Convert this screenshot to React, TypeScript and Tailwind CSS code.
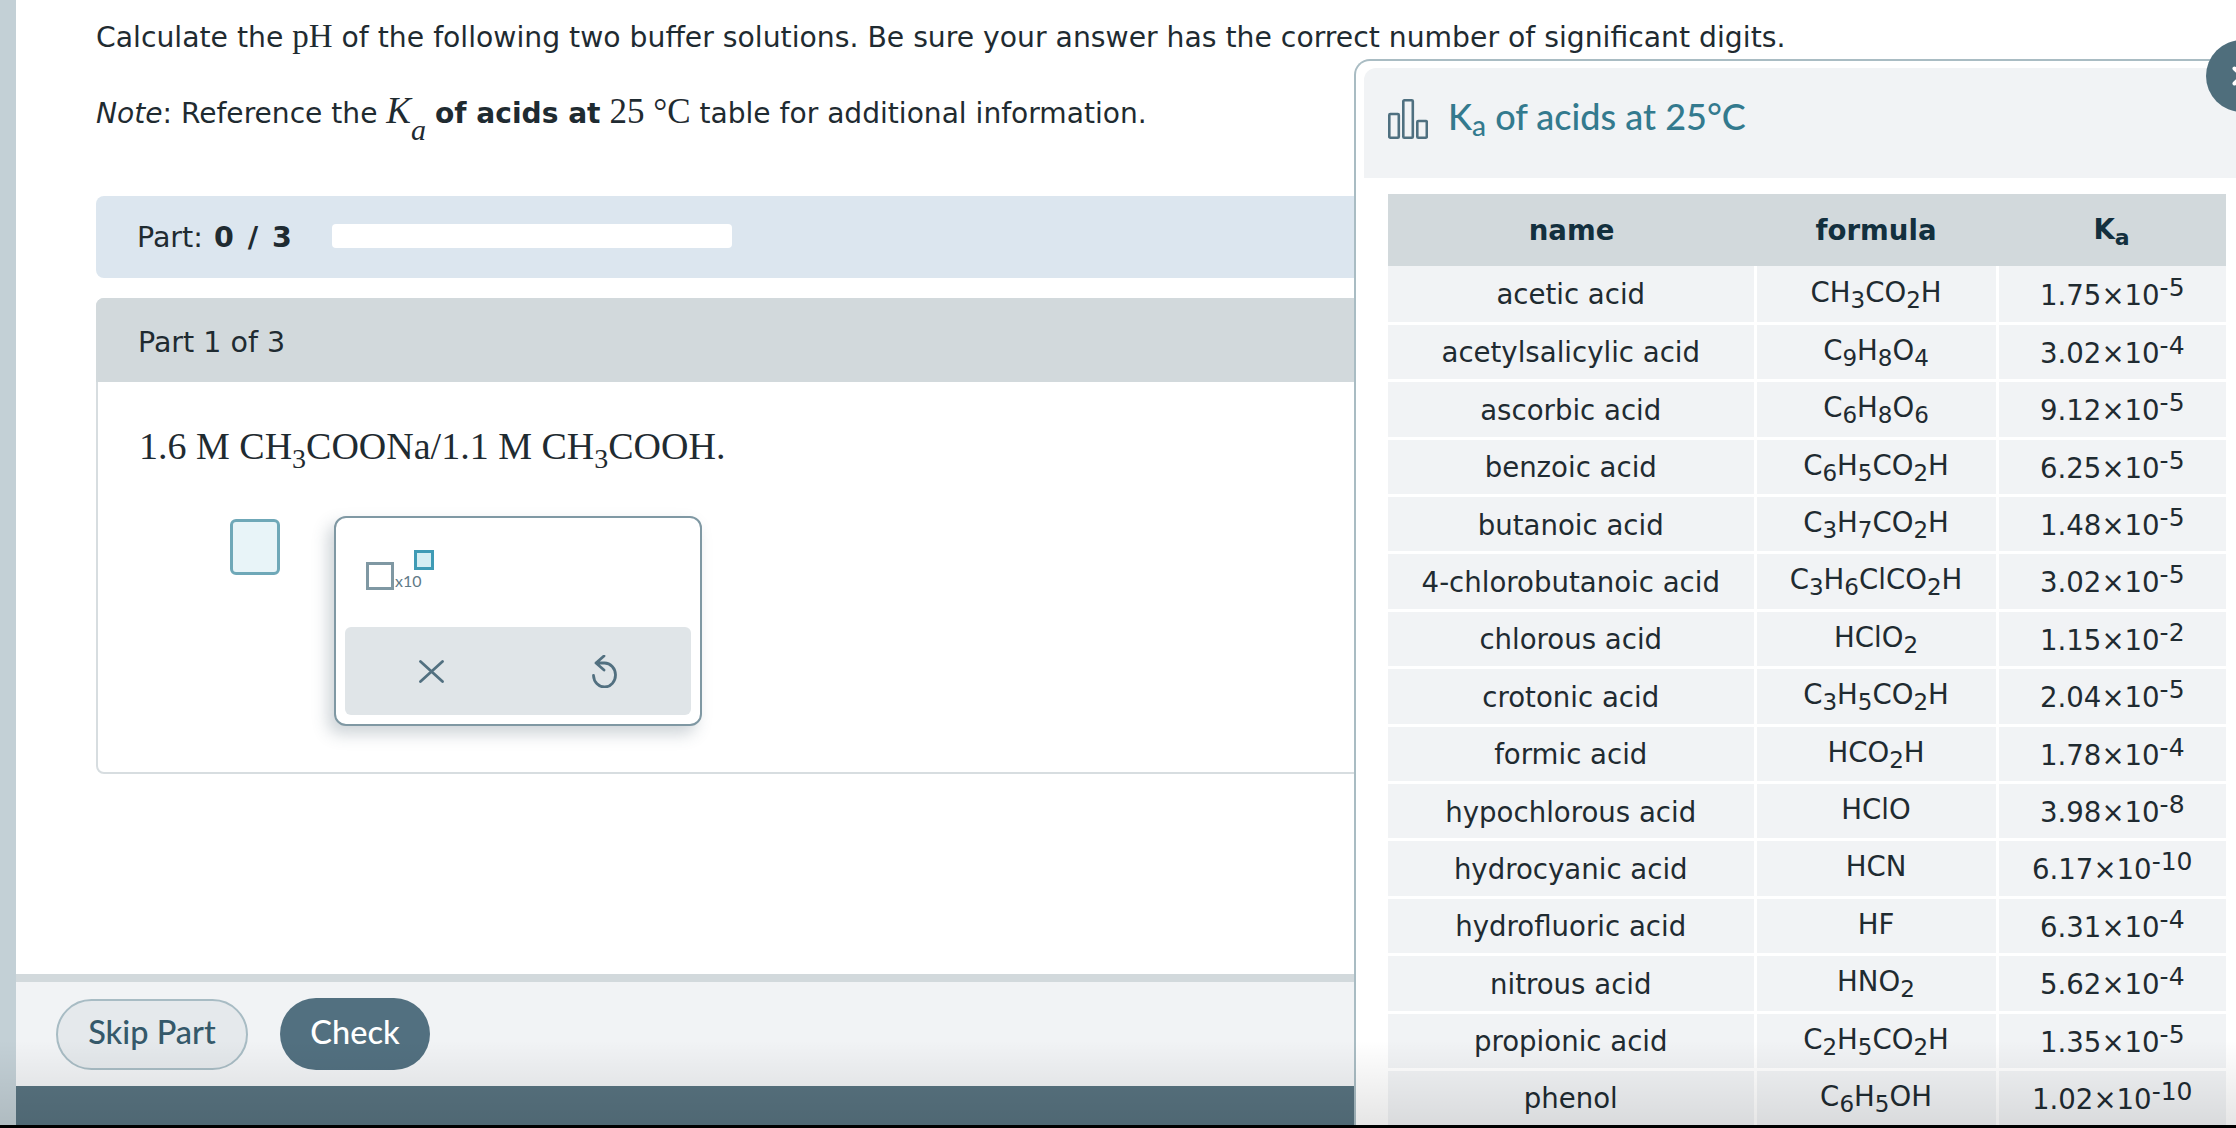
import React from "react";
import { X } from "lucide-react";

type Row = [string, React.ReactNode, string, string];
const S = ({ c }: { c: string }) => <span className="text-[23px] leading-none align-[-6px]">{c}</span>;

const rows: Row[] = [
  ["acetic acid", <>CH<S c="3" />CO<S c="2" />H</>, "1.75×10", "-5"],
  ["acetylsalicylic acid", <>C<S c="9" />H<S c="8" />O<S c="4" /></>, "3.02×10", "-4"],
  ["ascorbic acid", <>C<S c="6" />H<S c="8" />O<S c="6" /></>, "9.12×10", "-5"],
  ["benzoic acid", <>C<S c="6" />H<S c="5" />CO<S c="2" />H</>, "6.25×10", "-5"],
  ["butanoic acid", <>C<S c="3" />H<S c="7" />CO<S c="2" />H</>, "1.48×10", "-5"],
  ["4-chlorobutanoic acid", <>C<S c="3" />H<S c="6" />ClCO<S c="2" />H</>, "3.02×10", "-5"],
  ["chlorous acid", <>HClO<S c="2" /></>, "1.15×10", "-2"],
  ["crotonic acid", <>C<S c="3" />H<S c="5" />CO<S c="2" />H</>, "2.04×10", "-5"],
  ["formic acid", <>HCO<S c="2" />H</>, "1.78×10", "-4"],
  ["hypochlorous acid", <>HClO</>, "3.98×10", "-8"],
  ["hydrocyanic acid", <>HCN</>, "6.17×10", "-10"],
  ["hydrofluoric acid", <>HF</>, "6.31×10", "-4"],
  ["nitrous acid", <>HNO<S c="2" /></>, "5.62×10", "-4"],
  ["propionic acid", <>C<S c="2" />H<S c="5" />CO<S c="2" />H</>, "1.35×10", "-5"],
  ["phenol", <>C<S c="6" />H<S c="5" />OH</>, "1.02×10", "-10"],
];

const sans = "font-['DejaVu_Sans',Verdana,sans-serif]";
const serif = "font-['Liberation_Serif',serif]";
const proxima = "font-['Lato',sans-serif]";

export default function App() {
  return (
    <div className={`relative w-[2236px] h-[1128px] overflow-hidden flex flex-col bg-white text-[#1f2b31] ${sans}`}>
      <div className="flex-1 flex min-h-0">
        <div className="w-4 shrink-0 bg-[#c3d0d6]" />
        <div className="flex-1 flex flex-col min-w-0">
          <div className="flex-1 pl-[80px]">
            <p className="pt-[17px] h-[60px] text-[28.25px] leading-[38px] whitespace-nowrap">
              Calculate the <span className={`${serif} text-[33px]`}>pH</span> of the following two buffer solutions. Be sure your answer has the correct number of significant digits.
            </p>
            <p className="mt-[32px] h-[44px] text-[28.1px] leading-[38px] whitespace-nowrap">
              <i>Note</i>: Reference the{" "}
              <span className={`${serif} italic text-[37px]`}>K<span className="text-[30px] leading-none align-[-17px]">a</span></span>{" "}
              <b>of acids at</b> <span className={`${serif} text-[35px]`}>25 °C</span> table for additional information.
            </p>
            <div className="mt-[60px] h-[82px] w-[1300px] rounded-lg bg-[#dce6ef] flex items-center pl-[41px]">
              <span className="text-[28.5px] mt-[2px]">Part: <b className="ml-[2px] tracking-[2px]">0 / 3</b></span>
              <div className="ml-[38px] w-[400px] h-[24px] rounded bg-white -mt-[2px]" />
            </div>
            <div className="mt-[20px] w-[1300px] h-[476px] rounded-lg border-2 border-[#d7dde0] flex flex-col">
              <div className="h-[84px] -mx-[2px] -mt-[2px] rounded-t-lg bg-[#d2d9dc] flex items-center pl-[42px] pt-[6px] text-[28.5px]">Part 1 of 3</div>
              <p className={`mt-[40px] pl-[41px] ${serif} text-[38px] leading-[48px] whitespace-nowrap`}>
                1.6 M CH<span className="text-[28px] leading-none align-[-9px]">3</span>COONa/1.1 M CH<span className="text-[28px] leading-none align-[-9px]">3</span>COOH.
              </p>
              <div className="flex mt-[45px] ml-[132px]">
                <div className="w-[50px] h-[56px] mt-[1px] rounded-md border-[3px] border-[#6fa8b8] bg-[#e8f4f8]" />
                <div className="ml-[54px] -mt-[2px] w-[368px] h-[210px] rounded-xl border-2 border-[#7f98a3] bg-white shadow-[-6px_8px_16px_rgba(60,85,100,0.25)] p-[9px] flex flex-col">
                  <div className="h-[100px] relative shrink-0">
                    <div className="absolute left-[21px] top-[35px] w-[28px] h-[28px] border-[3px] border-[#7f98a3]" />
                    <span className={`absolute left-[50px] top-[44px] text-[16px] leading-[20px] text-[#5f7a87] ${proxima}`}>x10</span>
                    <div className="absolute left-[69px] top-[23px] w-[20px] h-[20px] border-[3px] border-[#3f9bb5] bg-[#d5eef3]" />
                  </div>
                  <div className="h-[88px] rounded-md bg-[#e0e5e8] flex items-center justify-around">
                    <svg width="25" height="23" viewBox="0 0 25 23" fill="none" stroke="#527080" strokeWidth="2.8" strokeLinecap="round"><path d="M1.5 1.5L23.5 21.5M23.5 1.5L1.5 21.5" /></svg>
                    <svg width="25" height="33" viewBox="0 0 25 33" fill="none" stroke="#527080" strokeWidth="2.8" strokeLinecap="round" strokeLinejoin="round"><path d="M12 1L4 8L12 15M4 8H12.5A11 12 0 1 1 1.5 20.5" /></svg>
                  </div>
                </div>
              </div>
            </div>
          </div>
          <div className="h-[112px] border-t-[8px] border-[#d2d9dc] bg-[#f1f3f5] flex items-center pl-[40px] gap-[32px]">
            <button className={`w-[192px] h-[71px] rounded-[36px] border-2 border-[#a8bcc4] bg-[#e5e9ec] text-[#35596a] text-[32.5px] font-medium pb-[4px] ${proxima}`}>Skip Part</button>
            <button className={`w-[150px] h-[72px] rounded-[36px] bg-[#527080] text-white text-[32.5px] font-medium pb-[4px] ${proxima}`}>Check</button>
          </div>
          <div className="h-[39px] bg-[#587380]" />
        </div>
      </div>
      <div className="h-[3px] bg-black shrink-0" />

      {/* Floating reference panel */}
      <div className="absolute left-[1354px] right-0 top-[59px] bottom-[3px] overflow-hidden rounded-tl-2xl border-l-2 border-t-2 border-[#a9bcc3] bg-white pl-[8px] pt-[7px]">
        <div className="h-[110px] rounded-tl-xl bg-[#f1f3f5] flex items-center gap-[20px] pl-[24px]">
          <svg width="40" height="40" viewBox="0 0 40 40" fill="none" stroke="#4f7080" strokeWidth="2.6" strokeLinejoin="round" className="-mt-[8px]">
            <rect x="1.3" y="15" width="9.5" height="23.7" rx="1" />
            <rect x="15.3" y="1.3" width="9.5" height="37.4" rx="1" />
            <rect x="29.3" y="22" width="9.5" height="16.7" rx="1" />
          </svg>
          <h2 className={`-mt-[14px] text-[#337a8e] text-[36px] font-medium ${proxima}`}>
            K<span className="text-[28px] leading-none align-[-6px]">a</span> of acids at 25°C
          </h2>
        </div>
        <table className="mt-[16px] ml-[24px] w-[838px] table-fixed border-collapse text-center text-[27.6px]">
          <colgroup>
            <col className="w-[367px]" />
            <col className="w-[242px]" />
            <col className="w-[229px]" />
          </colgroup>
          <thead>
            <tr className="h-[72px] bg-[#d2d9dc] text-[#13303e] font-bold">
              <th className="pt-[2px]">name</th>
              <th className="pt-[2px]">formula</th>
              <th>K<span className="text-[22px] leading-none align-[-6px]">a</span></th>
            </tr>
          </thead>
          <tbody>
            {rows.map((r) => (
              <tr key={r[0]} className="h-[57.4px] bg-[#f1f3f5] border-b-[3px] border-white">
                <td className="border-r-[3px] border-white p-0 pt-[2px]">{r[0]}</td>
                <td className="border-r-[3px] border-white p-0 pb-[3px]">{r[1]}</td>
                <td className="p-0 pt-[3px]">{r[2]}<span className="text-[25px] leading-none align-[9px]">{r[3]}</span></td>
              </tr>
            ))}
          </tbody>
        </table>
      </div>

      <div className="absolute left-0 right-0 bottom-[3px] h-[85px] bg-linear-to-b from-transparent to-black/10 pointer-events-none" />

      <div className="absolute left-[2206px] top-[40px] w-[72px] h-[72px] rounded-full bg-[#4f6e7c] flex items-center justify-center">
        <X size={30} strokeWidth={3.2} color="#ffffff" />
      </div>
    </div>
  );
}
